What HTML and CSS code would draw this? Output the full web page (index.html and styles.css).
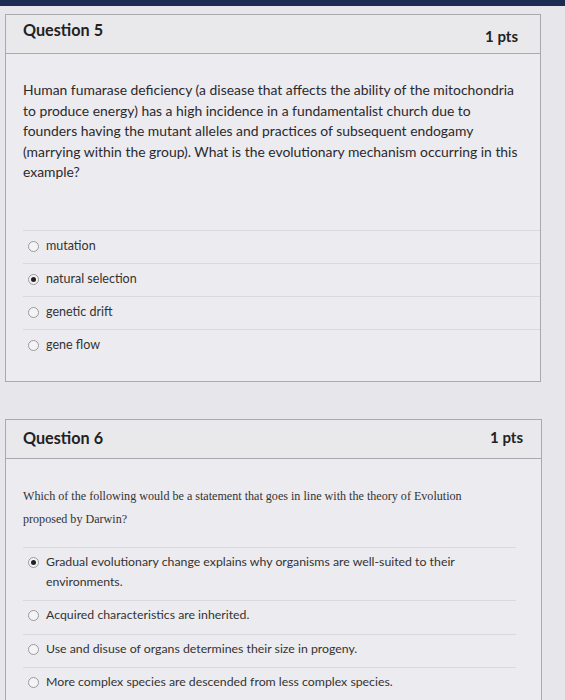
FILE: index.html
```html
<!DOCTYPE html>
<html>
<head>
<meta charset="utf-8">
<link rel="stylesheet" href="styles.css">
</head>
<body>
<div class="topbar"></div>
<div class="page">
  <div class="card q5">
    <div class="head">
      <div class="title">Question 5</div>
      <div class="pts">1 pts</div>
    </div>
    <div class="body">
      <p class="text">Human fumarase deficiency (a disease that affects the ability of the mitochondria to produce energy) has a high incidence in a fundamentalist church due to founders having the mutant alleles and practices of subsequent endogamy (marrying within the group). What is the evolutionary mechanism occurring in this example?</p>
      <div class="answers">
        <div class="ans"><span class="radio"></span><span>mutation</span></div>
        <div class="ans"><span class="radio on"></span><span>natural selection</span></div>
        <div class="ans"><span class="radio"></span><span>genetic drift</span></div>
        <div class="ans"><span class="radio"></span><span>gene flow</span></div>
      </div>
    </div>
  </div>

  <div class="card q6">
    <div class="head">
      <div class="title">Question 6</div>
      <div class="pts">1 pts</div>
    </div>
    <div class="body">
      <p class="text serif">Which of the following would be a statement that goes in line with the theory of Evolution proposed by Darwin?</p>
      <div class="answers">
        <div class="ans"><span class="radio on"></span><span>Gradual evolutionary change explains why organisms are well-suited to their environments.</span></div>
        <div class="ans"><span class="radio"></span><span>Acquired characteristics are inherited.</span></div>
        <div class="ans"><span class="radio"></span><span>Use and disuse of organs determines their size in progeny.</span></div>
        <div class="ans"><span class="radio"></span><span>More complex species are descended from less complex species.</span></div>
      </div>
    </div>
  </div>
</div>
</body>
</html>
```
FILE: styles.css
```css
html, body {
  margin: 0;
  padding: 0;
}
body {
  width: 565px;
  height: 700px;
  overflow: hidden;
  background: #e7e6ea;
  font-family: Lato, "Open Sans", sans-serif;
  color: #2d3b45;
}
.topbar {
  height: 6px;
  background: #1d2a52;
}
.page {
  padding: 8px 24px 0 5px;
}
.card {
  border: 1px solid #a9a9ae;
  background: #ecebef;
}
.q6 {
  margin-top: 37px;
  margin-right: -1px;
}
.head {
  display: flex;
  justify-content: space-between;
  align-items: flex-start;
  padding: 0 22px 0 17px;
  height: 38px;
  border-bottom: 1px solid #a9a9ae;
  background: #e9e9ec;
}
.q6 .head { padding-right: 18px; }
.title {
  font-size: 16.2px;
  font-weight: 700;
  color: #222;
  margin-top: 5px;
}
.pts {
  font-size: 15px;
  font-weight: 700;
  color: #222;
  margin-top: 12px;
}
.q6 .title { margin-top: 8px; }
.q6 .pts { margin-top: 8px; }
.body {
  padding: 0 17px;
}
.text {
  margin: 0;
  padding-top: 26px;
  font-size: 13.9px;
  line-height: 20.5px;
  color: #2a2a2e;
  width: 500px;
}
.serif {
  font-family: "Liberation Serif", "Times New Roman", serif;
  font-size: 12.1px;
  line-height: 23px;
  padding-top: 26px;
  color: #333;
  width: 470px;
}
.answers {
  margin-top: 47px;
  padding-bottom: 19px;
}
.q6 .answers { margin-top: 16px; }
.ans {
  display: flex;
  align-items: flex-start;
  border-top: 1px solid #d9d9de;
  padding: 5px 0 7px 1px;
  font-size: 12.5px;
  line-height: 20px;
  color: #333;
  margin-right: 8px;
}
.q5 .ans { margin-right: -17px; }
.radio {
  flex: none;
  width: 9px;
  height: 9px;
  border: 1px solid #9a9a9f;
  border-radius: 50%;
  background: #f4f4f6;
  margin: 5px 7px 0 4px;
  box-sizing: content-box;
  position: relative;
}
.radio.on::after {
  content: "";
  position: absolute;
  left: 2px;
  top: 2px;
  width: 5px;
  height: 5px;
  border-radius: 50%;
  background: #222;
}
.q6 .ans { font-size: 12.3px; padding-top: 4px; padding-bottom: 8.5px; }
```
